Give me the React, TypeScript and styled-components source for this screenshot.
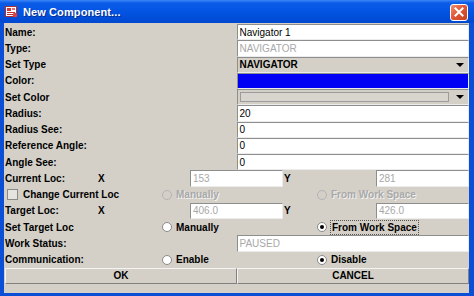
import React from "react";
import styled, { createGlobalStyle } from "styled-components";

const Global = createGlobalStyle`
  html, body { margin: 0; padding: 0; background: #fff; }
  body { font-family: "Liberation Sans", Arial, sans-serif; }
  * { box-sizing: border-box; }
`;

const Window = styled.div`
  width: 474px;
  height: 296px;
  display: flex;
  flex-direction: column;
  background: #0b4fd6;
  overflow: hidden;
`;

const TitleBar = styled.div`
  height: 23px;
  flex: none;
  display: flex;
  align-items: center;
  padding: 0 6px 0 5px;
  background: linear-gradient(#3d86f5 0px, #0a5ce8 3px, #0354e2 50%, #0048d0 100%);
`;

const TitleText = styled.span`
  flex: 1;
  margin-left: 5px;
  color: #fff;
  font-weight: bold;
  font-size: 11px;
  letter-spacing: 0.1px;
  text-shadow: 1px 1px 0 #0a2c8c;
`;

const CloseButton = styled.div`
  width: 18px;
  height: 17px;
  margin-top: 1px;
  border: 1px solid #fff;
  border-radius: 3px;
  background: linear-gradient(135deg, #f0906c 0%, #e2583a 45%, #c8401f 100%);
  display: flex;
  align-items: center;
  justify-content: center;
`;

const Body = styled.div`
  flex: 1;
  margin: 0 5px 3px 4px;
  padding-top: 1px;
  background: #d4d0c8;
  display: flex;
  flex-direction: column;
`;

const Form = styled.div`
  height: 260px;
  display: grid;
  grid-template-rows: repeat(16, 1fr);
`;

const Row = styled.div<{ $cols: number }>`
  display: grid;
  grid-template-columns: repeat(${(p) => p.$cols}, 1fr);
  min-height: 0;
`;

const Label = styled.div`
  display: flex;
  align-items: center;
  padding-left: 1px;
  font-size: 10px;
  font-weight: bold;
  color: #000;
  white-space: nowrap;
`;

const Field = styled.div<{ $disabled?: boolean }>`
  display: flex;
  align-items: center;
  padding-left: 2px;
  background: #fff;
  border-top: 1px solid #8e8e8e;
  border-left: 1px solid #8e8e8e;
  border-bottom: 1px solid #ececec;
  border-right: 1px solid #ececec;
  font-size: 10px;
  color: ${(p) => (p.$disabled ? "#a8a8a8" : "#000")};
  white-space: nowrap;
  overflow: hidden;
`;

const ColorField = styled.div<{ $color: string }>`
  background: ${(p) => p.$color};
  border-top: 1px solid #8e8e8e;
  border-left: 1px solid #8e8e8e;
  border-bottom: 1px solid #ececec;
  border-right: 1px solid #ececec;
`;

const Combo = styled.div`
  display: flex;
  align-items: stretch;
  background: #d4d0c8;
  border-top: 1px solid #8e8e8e;
  border-left: 1px solid #8e8e8e;
  border-bottom: 1px solid #ececec;
  border-right: 1px solid #ececec;
`;

const ComboValue = styled.div`
  flex: 1;
  display: flex;
  align-items: center;
  padding-left: 2px;
  font-size: 10px;
  font-weight: bold;
  color: #000;
`;

const Swatch = styled.div`
  flex: 1;
  margin: 2px 2px 2px 2px;
  border: 1px solid #9c9c9c;
  background: #d8d5ce;
`;

const ArrowBox = styled.div`
  width: 17px;
  display: flex;
  align-items: center;
  justify-content: center;
`;

const Arrow = styled.div`
  width: 0;
  height: 0;
  border-left: 4px solid transparent;
  border-right: 4px solid transparent;
  border-top: 4px solid #000;
`;

const Option = styled.div<{ $disabled?: boolean }>`
  display: flex;
  align-items: center;
  gap: 4px;
  padding-left: 3px;
  font-size: 10px;
  font-weight: bold;
  color: ${(p) => (p.$disabled ? "#a9a9a9" : "#000")};
  text-shadow: ${(p) => (p.$disabled ? "1px 1px 0 #f2f2f2" : "none")};
  white-space: nowrap;
`;

const Radio = styled.span<{ $checked?: boolean; $disabled?: boolean }>`
  position: relative;
  width: 10px;
  height: 10px;
  flex: none;
  border-radius: 50%;
  border: 1px solid ${(p) => (p.$disabled ? "#b4b4b4" : "#8a8a8a")};
  background: ${(p) => (p.$disabled ? "#d4d0c8" : "#fff")};
  &::after {
    content: "";
    display: ${(p) => (p.$checked ? "block" : "none")};
    position: absolute;
    left: 2px;
    top: 2px;
    width: 4px;
    height: 4px;
    border-radius: 50%;
    background: #000;
  }
`;

const Check = styled.span`
  width: 11px;
  height: 11px;
  flex: none;
  border: 1px solid #8a8a8a;
  background: #e6e4df;
  margin-right: 1px;
`;

const Focus = styled.span`
  padding: 1px 1px;
  outline: 1px dotted #555;
  outline-offset: 0;
`;

const ButtonRow = styled.div`
  display: grid;
  grid-template-columns: 1fr 1fr;
  padding-left: 1px;
`;

const Button = styled.div`
  display: flex;
  align-items: center;
  justify-content: center;
  background: #d4d0c8;
  border: 1px solid;
  border-color: #f4f4f4 #808080 #808080 #f4f4f4;
  font-size: 10px;
  font-weight: bold;
  color: #000;
`;

const AppIcon = () => (
  <svg width="13" height="13" viewBox="0 0 13 13">
    <rect x="0.5" y="1.5" width="11" height="10" fill="#fff" stroke="#b03030" />
    <rect x="2" y="3" width="4" height="3" fill="#d83a3a" />
    <rect x="7" y="3" width="3" height="2" fill="#e07070" />
    <rect x="2" y="7" width="8" height="1" fill="#c03030" />
    <rect x="2" y="9" width="6" height="1" fill="#c03030" />
    <circle cx="10" cy="10" r="2.3" fill="#e04040" />
  </svg>
);

const CloseX = () => (
  <svg width="10" height="10" viewBox="0 0 10 10">
    <path d="M1.5 1.5 L8.5 8.5 M8.5 1.5 L1.5 8.5" stroke="#fff" strokeWidth="2" strokeLinecap="square" />
  </svg>
);

const TextRow = ({ label, value, disabled }: { label: string; value: string; disabled?: boolean }) => (
  <Row $cols={2}>
    <Label>{label}</Label>
    <Field $disabled={disabled}>{value}</Field>
  </Row>
);

const LocRow = ({ label, x, y }: { label: string; x: string; y: string }) => (
  <Row $cols={5}>
    <Label>{label}</Label>
    <Label>X</Label>
    <Field $disabled>{x}</Field>
    <Label>Y</Label>
    <Field $disabled>{y}</Field>
  </Row>
);

export default function App() {
  return (
    <>
      <Global />
      <Window>
        <TitleBar>
          <AppIcon />
          <TitleText>New Component...</TitleText>
          <CloseButton>
            <CloseX />
          </CloseButton>
        </TitleBar>
        <Body>
          <Form>
            <TextRow label="Name:" value="Navigator 1" />
            <TextRow label="Type:" value="NAVIGATOR" disabled />
            <Row $cols={2}>
              <Label>Set Type</Label>
              <Combo>
                <ComboValue>NAVIGATOR</ComboValue>
                <ArrowBox>
                  <Arrow />
                </ArrowBox>
              </Combo>
            </Row>
            <Row $cols={2}>
              <Label>Color:</Label>
              <ColorField $color="#0000f4" />
            </Row>
            <Row $cols={2}>
              <Label>Set Color</Label>
              <Combo>
                <Swatch />
                <ArrowBox>
                  <Arrow />
                </ArrowBox>
              </Combo>
            </Row>
            <TextRow label="Radius:" value="20" />
            <TextRow label="Radius See:" value="0" />
            <TextRow label="Reference Angle:" value="0" />
            <TextRow label="Angle See:" value="0" />
            <LocRow label="Current Loc:" x="153" y="281" />
            <Row $cols={3}>
              <Option>
                <Check />
                Change Current Loc
              </Option>
              <Option $disabled>
                <Radio $disabled />
                Manually
              </Option>
              <Option $disabled>
                <Radio $disabled />
                From Work Space
              </Option>
            </Row>
            <LocRow label="Target Loc:" x="406.0" y="426.0" />
            <Row $cols={3}>
              <Label>Set Target Loc</Label>
              <Option>
                <Radio />
                Manually
              </Option>
              <Option>
                <Radio $checked />
                <Focus>From Work Space</Focus>
              </Option>
            </Row>
            <TextRow label="Work Status:" value="PAUSED" disabled />
            <Row $cols={3}>
              <Label>Communication:</Label>
              <Option>
                <Radio />
                Enable
              </Option>
              <Option>
                <Radio $checked />
                Disable
              </Option>
            </Row>
            <ButtonRow>
              <Button>OK</Button>
              <Button>CANCEL</Button>
            </ButtonRow>
          </Form>
        </Body>
      </Window>
    </>
  );
}
